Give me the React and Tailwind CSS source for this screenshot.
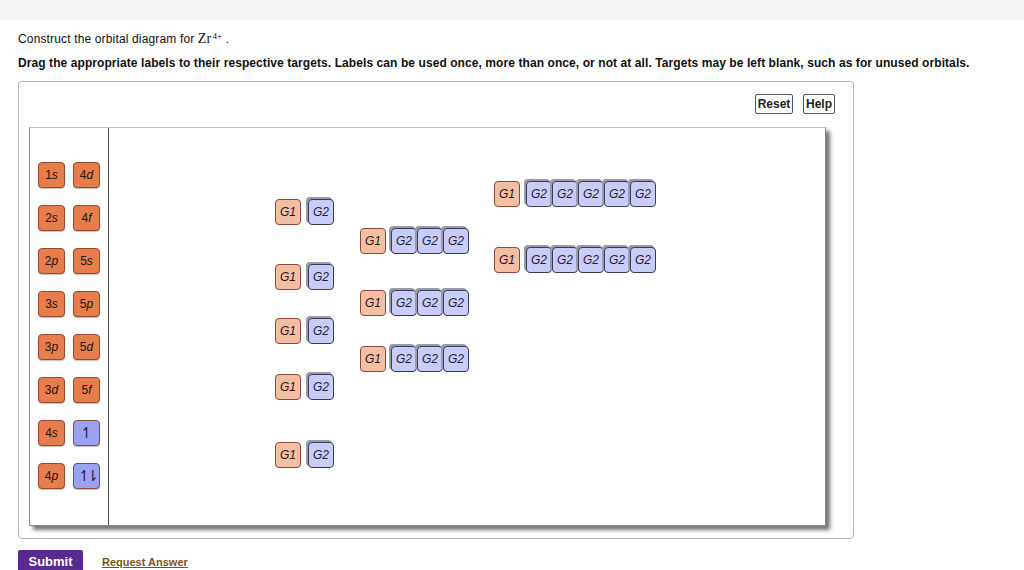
import React from "react";

const palette = [
  [["1", "s"], ["4", "d"]],
  [["2", "s"], ["4", "f"]],
  [["2", "p"], ["5", "s"]],
  [["3", "s"], ["5", "p"]],
  [["3", "p"], ["5", "d"]],
  [["3", "d"], ["5", "f"]],
  [["4", "s"], "up"],
  [["4", "p"], "updown"],
];

function OrbTile({ n, l }) {
  return (
    <div className="w-[27px] h-[26px] rounded-[4px] bg-[#e57d4d] border border-[#9a4a2a] flex items-center justify-center text-[12px] text-[#24160c] shadow-[0_1px_1px_rgba(0,0,0,0.25)]">
      <span>{n}</span>
      <span className="italic">{l}</span>
    </div>
  );
}

function ArrowTile({ kind }) {
  return (
    <div className="w-[27px] h-[26px] rounded-[4px] bg-[#9ca2f3] border border-[#8a4a3c] flex items-center justify-center text-[15px] text-[#22224a] shadow-[0_1px_1px_rgba(0,0,0,0.25)]" style={{ fontFamily: '"DejaVu Sans", sans-serif' }}>
      {kind === "up" ? "↿" : <span className="tracking-[-4px]">↿⇂</span>}
    </div>
  );
}

function G1() {
  return (
    <div className="w-[26px] h-[26px] rounded-[4px] bg-[#f4bea3] border border-[#8a4a3a] flex items-center justify-center text-[12px] italic text-[#1e1616]">
      G1
    </div>
  );
}

function G2() {
  return (
    <div className="w-[26px] h-[26px] rounded-[4px] bg-[#c9cbf9] border border-[#3b3b55] flex items-center justify-center text-[12px] italic text-[#1e1e36] shadow-[-2px_-2px_0_#9a9aa8]">
      G2
    </div>
  );
}

function Group({ x, y, n, gap }) {
  return (
    <div className="absolute flex items-center" style={{ left: x, top: y }}>
      <G1 />
      <div className="flex" style={{ marginLeft: gap }}>
        {Array.from({ length: n }).map((_, i) => (
          <G2 key={i} />
        ))}
      </div>
    </div>
  );
}

const groups = [
  { x: 166, y: 71, n: 1, gap: 7 },
  { x: 166, y: 136, n: 1, gap: 7 },
  { x: 166, y: 190, n: 1, gap: 7 },
  { x: 166, y: 246, n: 1, gap: 7 },
  { x: 166, y: 314, n: 1, gap: 7 },
  { x: 251, y: 100, n: 3, gap: 5 },
  { x: 251, y: 162, n: 3, gap: 5 },
  { x: 251, y: 218, n: 3, gap: 5 },
  { x: 385, y: 53, n: 5, gap: 6 },
  { x: 385, y: 119, n: 5, gap: 6 },
];

export default function App() {
  return (
    <div className="w-[1024px] h-[570px] overflow-hidden bg-white text-[#111]" style={{ fontFamily: '"Liberation Sans", Arial, sans-serif' }}>
      <div className="h-[20px] bg-[#f5f5f5]" />
      <div className="pl-[18px]">
        <div className="mt-[11px] h-[16px] leading-[16px] text-[12px] tracking-[0.15px] whitespace-nowrap">
          <span>Construct the orbital diagram for </span>
          <span className="text-[14px]" style={{ fontFamily: '"Liberation Serif", serif' }}>Zr</span>
          <span className="text-[9px] relative -top-[4px] ml-[1px]" style={{ fontFamily: '"Liberation Serif", serif' }}>4+</span>
          <span> .</span>
        </div>
        <div className="mt-[8px] h-[16px] flex items-center text-[12px] font-bold tracking-[0.08px]">
          Drag the appropriate labels to their respective targets. Labels can be used once, more than once, or not at all. Targets may be left blank, such as for unused orbitals.
        </div>
        <div className="mt-[10px] w-[836px] h-[458px] border border-[#b4b4b4] rounded-[4px] flex flex-col">
          <div className="flex justify-end gap-[10px] pt-[12px] pr-[18px]">
            <div className="h-[20px] w-[38px] border border-[#555] rounded-[2px] flex items-center justify-center text-[12px] font-bold text-[#222]">Reset</div>
            <div className="h-[20px] w-[32px] border border-[#555] rounded-[2px] flex items-center justify-center text-[12px] font-bold text-[#222]">Help</div>
          </div>
          <div className="ml-[10px] mt-[13px] w-[797px] h-[399px] flex border border-[#8a8a8a] border-t-[#c4c4c4] shadow-[4px_4px_4px_rgba(0,0,0,0.55)] bg-white">
            <div className="w-[79px] h-full border-r border-[#555] pt-[34px] pl-[8px] flex flex-col gap-[17px]">
              {palette.map((row, i) => (
                <div key={i} className="flex gap-[8px]">
                  <OrbTile n={row[0][0]} l={row[0][1]} />
                  {Array.isArray(row[1]) ? <OrbTile n={row[1][0]} l={row[1][1]} /> : <ArrowTile kind={row[1]} />}
                </div>
              ))}
            </div>
            <div className="relative flex-1 h-full">
              {groups.map((g, i) => (
                <Group key={i} {...g} />
              ))}
            </div>
          </div>
        </div>
        <div className="mt-[11px] flex items-center">
          <div className="w-[65px] h-[20px] bg-[#5a2a90] text-white font-bold text-[13px] leading-[14px] flex items-center justify-center pt-[3px] rounded-t-[2px]">Submit</div>
          <div className="ml-[19px] text-[11px] leading-[14px] font-bold text-[#7a5518] underline pt-[3px]">Request Answer</div>
        </div>
      </div>
    </div>
  );
}
